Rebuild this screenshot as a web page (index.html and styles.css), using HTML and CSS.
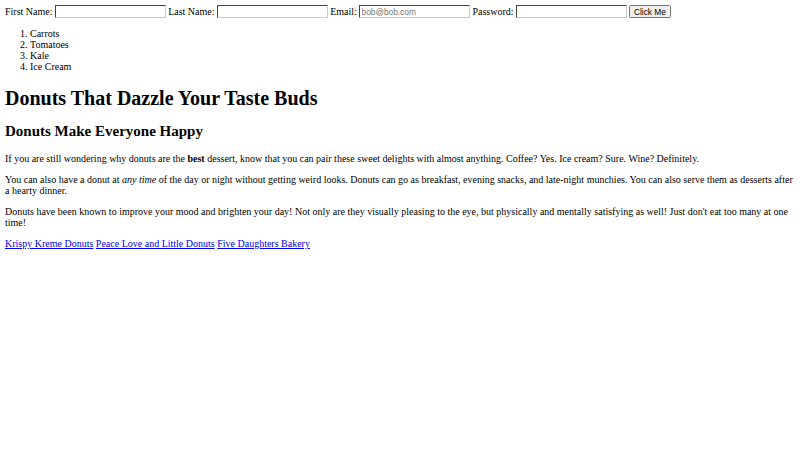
FILE: index.html
```
<!DOCTYPE html>
<html>
<head>
<meta charset="utf-8">
<title>Donuts</title>
<link rel="stylesheet" href="styles.css">
</head>
<body class="page">
<form class="signup">
<label>First Name: <input type="text" class="field"></label>
<label>Last Name: <input type="text" class="field"></label>
<label>Email: <input type="email" class="field" placeholder="bob@bob.com"></label>
<label>Password: <input type="password" class="field"></label>
<button type="button" class="btn">Click Me</button>
</form>
<ol class="list">
<li>Carrots</li>
<li>Tomatoes</li>
<li>Kale</li>
<li>Ice Cream</li>
</ol>
<h1 class="title">Donuts That Dazzle Your Taste Buds</h1>
<h2 class="subtitle">Donuts Make Everyone Happy</h2>
<p class="para">If you are still wondering why donuts are the <strong>best</strong> dessert, know that you can pair these sweet delights with almost anything. Coffee? Yes. Ice cream? Sure. Wine? Definitely.</p>
<p class="para">You can also have a donut at <em>any time</em> of the day or night without getting weird looks. Donuts can go as breakfast, evening snacks, and late-night munchies. You can also serve them as desserts after a hearty dinner.</p>
<p class="para">Donuts have been known to improve your mood and brighten your day! Not only are they visually pleasing to the eye, but physically and mentally satisfying as well! Just don't eat too many at one time!</p>
<p class="para links"><a href="#" class="link">Krispy Kreme Donuts</a> <a href="#" class="link">Peace Love and Little Donuts</a> <a href="#" class="link">Five Daughters Bakery</a></p>
</body>
</html>
```
FILE: styles.css
```
.page {
  zoom: 0.625;
  margin: 8px;
  font-family: "Liberation Serif", "Times New Roman", serif;
  font-size: 16px;
  color: #000;
  background: #fff;
}
.signup {
  margin: 0;
}
.field {
  font-family: "Liberation Sans", Arial, sans-serif;
  font-size: 13.33px;
  box-sizing: border-box;
  width: 177px;
  height: 21px;
  border: 2px inset #ccc;
  border-color: #999 #ccc #ccc #999;
  padding: 1px 2px;
}
.btn {
  font-family: "Liberation Sans", Arial, sans-serif;
  font-size: 13.33px;
}
.list {
  margin: 16px 0;
  padding-left: 40px;
}
.title {
  font-size: 32px;
  margin: 23px 0 21px;
}
.subtitle {
  font-size: 24px;
  margin: 20px 0 21px;
}
.para {
  margin: 16px 0;
}
.link {
  color: #0000ee;
}
```
